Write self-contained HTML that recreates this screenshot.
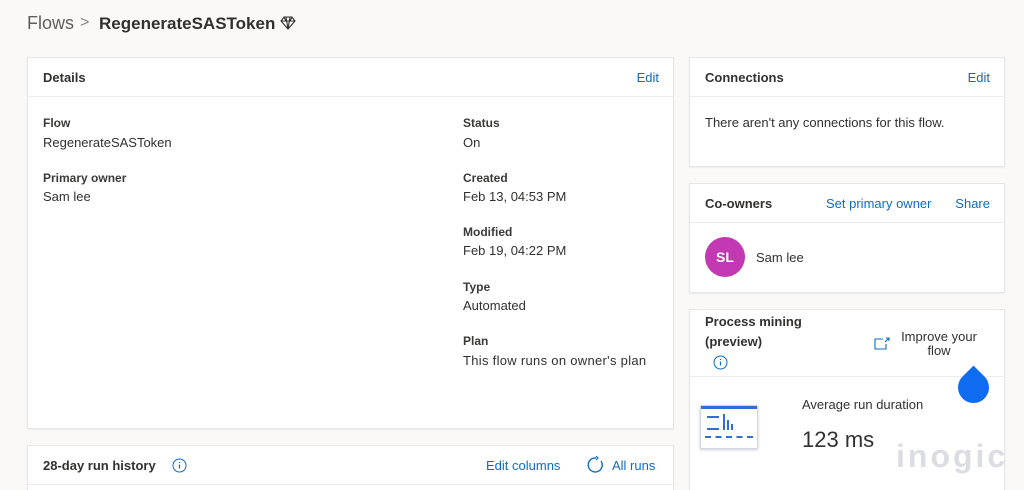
<!DOCTYPE html>
<html><head><style>
html,body{margin:0;width:1024px;height:490px;overflow:hidden}
body{background:#faf9f8;font-family:"Liberation Sans",sans-serif;color:#323130;position:relative;font-size:13px}
.card{position:absolute;background:#fff;border:1px solid #e6e6e6;box-shadow:0 1px 2px rgba(0,0,0,.06)}
.hd{height:38px;border-bottom:1px solid #ececec;position:relative}
.hd b{position:absolute;left:15px;top:12px;font-size:13px}
.a{color:#0f6cbd;position:absolute;top:12px;font-size:13px}
.lbl{position:absolute;font-size:12px;font-weight:bold;color:#3b3a39}
.val{position:absolute;font-size:13px;color:#323130}
</style></head><body>
<div style="position:absolute;left:27px;top:13px;font-size:18px;color:#605e5c">Flows</div>
<div style="position:absolute;left:80px;top:14px;font-size:16px;color:#8a8886">&gt;</div>
<div style="position:absolute;left:99px;top:14px;font-size:17px;font-weight:bold;color:#323130">RegenerateSASToken</div>
<svg style="position:absolute;left:280px;top:16px" width="16" height="14" viewBox="0 0 16 14"><path d="M4 1h8l3 4-7 8-7-8zM1 5h14M6 1l2 12 2-12M4 1l2 4M12 1l-2 4" fill="none" stroke="#323130" stroke-width="1.1"/></svg>

<div class="card" style="left:27px;top:57px;width:645px;height:370px">
<div class="hd"><b>Details</b><span class="a" style="right:14px">Edit</span></div>
<div class="lbl" style="left:15px;top:58px">Flow</div><div class="val" style="left:15px;top:77px">RegenerateSASToken</div>
<div class="lbl" style="left:15px;top:113px">Primary owner</div><div class="val" style="left:15px;top:131px">Sam lee</div>
<div class="lbl" style="left:435px;top:58px">Status</div><div class="val" style="left:435px;top:77px">On</div>
<div class="lbl" style="left:435px;top:113px">Created</div><div class="val" style="left:435px;top:131px">Feb 13, 04:53 PM</div>
<div class="lbl" style="left:435px;top:167px">Modified</div><div class="val" style="left:435px;top:185px">Feb 19, 04:22 PM</div>
<div class="lbl" style="left:435px;top:222px">Type</div><div class="val" style="left:435px;top:240px">Automated</div>
<div class="lbl" style="left:435px;top:276px">Plan</div><div class="val" style="left:435px;top:295px;letter-spacing:0.3px">This flow runs on owner's plan</div>
</div>

<div class="card" style="left:27px;top:445px;width:645px;height:60px">
<div class="hd"><b>28-day run history</b>
<svg style="position:absolute;left:144px;top:12px" width="15" height="15" viewBox="0 0 15 15"><circle cx="7.5" cy="7.5" r="6.5" fill="none" stroke="#0f6cbd"/><path d="M7.5 6.5v4M7.5 4v1" stroke="#0f6cbd" stroke-width="1.2"/></svg>
<span class="a" style="left:458px">Edit columns</span>
<svg style="position:absolute;left:559px;top:10px" width="18" height="18" viewBox="0 0 18 18"><path d="M14 5A7 7 0 1 1 9 2" fill="none" stroke="#0f6cbd" stroke-width="1.4"/><path d="M9 0l2 2-2 2" fill="none" stroke="#0f6cbd" stroke-width="1.2"/></svg>
<span class="a" style="left:584px">All runs</span></div>
</div>

<div class="card" style="left:689px;top:57px;width:314px;height:108px">
<div class="hd"><b>Connections</b><span class="a" style="right:14px">Edit</span></div>
<div class="val" style="left:15px;top:57px">There aren't any connections for this flow.</div>
</div>

<div class="card" style="left:689px;top:183px;width:314px;height:108px">
<div class="hd"><b>Co-owners</b><span class="a" style="left:136px">Set primary owner</span><span class="a" style="right:14px">Share</span></div>
<div style="position:absolute;left:15px;top:53px;width:40px;height:40px;border-radius:50%;background:#c239b3;color:#fff;font-weight:bold;font-size:14px;line-height:40px;text-align:center">SL</div>
<div class="val" style="left:66px;top:66px">Sam lee</div>
</div>

<div class="card" style="left:689px;top:309px;width:314px;height:200px">
<div style="height:66px;border-bottom:1px solid #ececec;position:relative">
<b style="position:absolute;left:15px;top:2px;line-height:20px">Process mining<br>(preview)</b>
<svg style="position:absolute;left:23px;top:45px" width="15" height="15" viewBox="0 0 15 15"><circle cx="7.5" cy="7.5" r="6.5" fill="none" stroke="#0f6cbd"/><path d="M7.5 6.5v4M7.5 4v1" stroke="#0f6cbd" stroke-width="1.2"/></svg>
<svg style="position:absolute;left:184px;top:27px" width="16" height="13" viewBox="0 0 16 13"><path d="M9 2H1v10h11V7M12 1l3 0 0 3M15 1l-4 4" fill="none" stroke="#0f6cbd" stroke-width="1.1"/></svg>
<div style="position:absolute;left:204px;top:20px;width:90px;text-align:center;line-height:14px;color:#323130">Improve your flow</div>
</div>
<div style="position:absolute;left:268px;top:62px;width:31px;height:31px;background:#0f6cf0;border-radius:50% 0 50% 50%;transform:rotate(-45deg)"></div>
<div style="position:absolute;left:10px;top:95px;width:56px;height:42px;background:#fff;border:1px solid #d0d8e8;box-shadow:0 1px 3px rgba(0,0,0,.2)">
<div style="height:3px;background:#2f6fcf"></div>
<div style="position:absolute;left:6px;top:10px;width:12px;height:10px;border-top:2px solid #2f6fcf;border-bottom:2px solid #2f6fcf"></div>
<div style="position:absolute;left:22px;top:8px;width:2px;height:16px;background:#2f6fcf"></div>
<div style="position:absolute;left:26px;top:14px;width:2px;height:10px;background:#2f6fcf"></div>
<div style="position:absolute;left:30px;top:18px;width:2px;height:6px;background:#2f6fcf"></div>
<div style="position:absolute;left:4px;top:30px;width:48px;height:4px;border-top:2px dashed #2f6fcf"></div>
</div>
<div class="val" style="left:112px;top:87px;font-size:13px">Average run duration</div>
<div class="val" style="left:112px;top:117px;font-size:22px">123 ms</div>
<div style="position:absolute;left:206px;top:128px;font-size:32px;font-weight:bold;color:#dcdce3;letter-spacing:3px">inogic</div>
</div>
</body></html>
